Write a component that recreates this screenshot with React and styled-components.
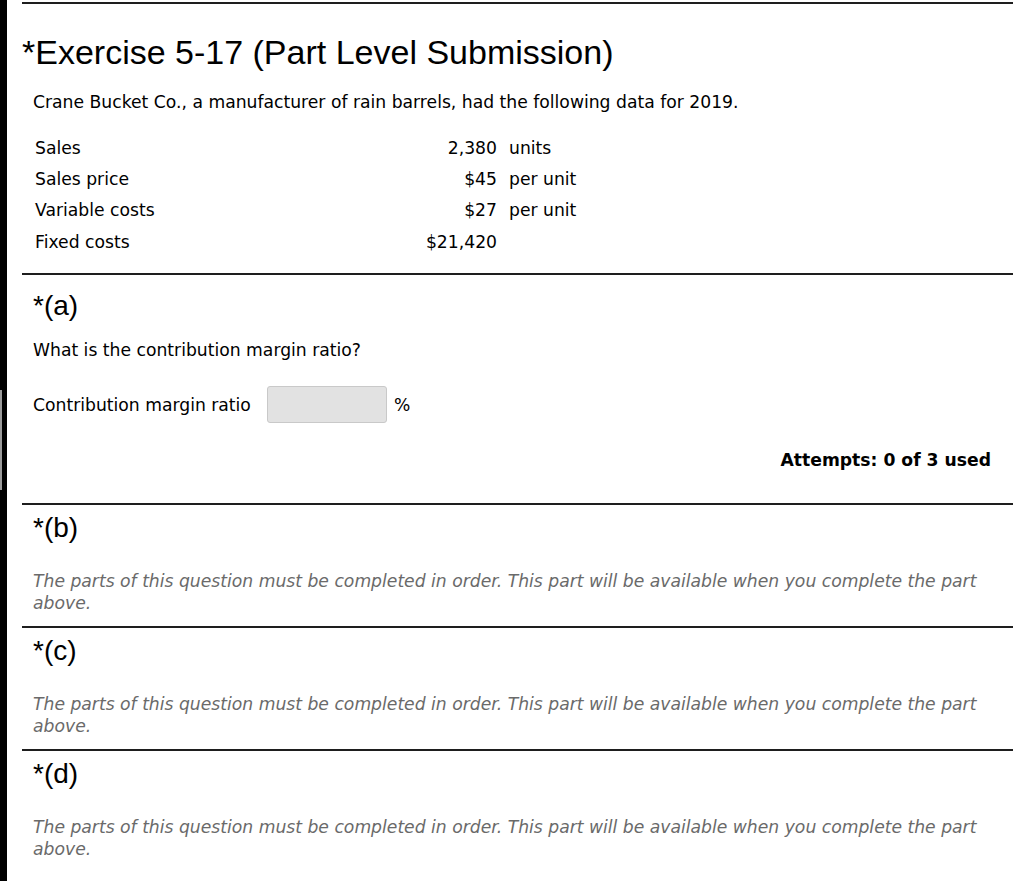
import React from "react";
import styled, { createGlobalStyle } from "styled-components";

const Global = createGlobalStyle`
  html, body { margin: 0; padding: 0; background: #fff; }
  body { font-family: "DejaVu Sans", Verdana, sans-serif; color: #000; }
  * { box-sizing: border-box; }
`;

const Page = styled.div`
  display: flex;
  min-height: 881px;
  width: 1024px;
`;

const LeftBar = styled.div`
  position: relative;
  flex: 0 0 7px;
  background: #000;
`;

const Thumb = styled.div`
  position: absolute;
  left: 0;
  top: 390px;
  width: 2px;
  height: 100px;
  background: #9a9a9a;
`;

const Main = styled.main`
  flex: 1;
  padding: 2px 11px 0 15px;
`;

const Section = styled.section`
  border-top: 2px solid #1e1e1e;
  padding: ${(p) => p.$pad || "0"};
`;

const Title = styled.h1`
  margin: 28px 0 0 0;
  font-family: "Liberation Sans", Arial, sans-serif;
  font-weight: 400;
  font-size: 34px;
  line-height: 40px;
`;

const Body = styled.p`
  margin: ${(p) => p.$m || "0"};
  padding-left: 11px;
  font-size: 17.2px;
  line-height: 20px;
`;

const DataTable = styled.div`
  display: grid;
  grid-template-columns: 330px 132px auto;
  margin: 20px 0 0 13px;
  font-size: 17.2px;
`;

const Cell = styled.div`
  height: 31.3px;
  display: flex;
  align-items: center;
  justify-content: ${(p) => (p.$right ? "flex-end" : "flex-start")};
  padding-left: ${(p) => (p.$unit ? "12px" : "0")};
`;

const PartHeading = styled.h2`
  margin: ${(p) => p.$m || "6px 0 0 0"};
  padding-left: 11px;
  font-family: "Liberation Sans", Arial, sans-serif;
  font-weight: 400;
  font-size: 28px;
  line-height: 34px;
`;

const AnswerRow = styled.div`
  display: flex;
  align-items: center;
  margin-top: 26px;
  padding-left: 11px;
  font-size: 17.2px;
`;

const AnswerInput = styled.input`
  width: 120px;
  height: 37px;
  margin: 0 7px 0 16px;
  background: #e2e2e2;
  border: 1px solid #c9c9c9;
  border-radius: 3px;
  font-family: inherit;
  font-size: 16px;
  padding: 0 6px;
`;

const Attempts = styled.div`
  margin-top: 27px;
  padding-right: 22px;
  text-align: right;
  font-size: 17.2px;
  line-height: 20px;
  font-weight: 700;
`;

const Locked = styled.p`
  margin: 25px 0 0 0;
  padding-left: 11px;
  padding-right: 20px;
  font-size: 17.2px;
  line-height: 22px;
  font-style: italic;
  color: #6a6a6a;
`;

const rows = [
  ["Sales", "2,380", "units"],
  ["Sales price", "$45", "per unit"],
  ["Variable costs", "$27", "per unit"],
  ["Fixed costs", "$21,420", ""],
];

const lockedText =
  "The parts of this question must be completed in order. This part will be available when you complete the part above.";

export default function App() {
  return (
    <>
      <Global />
      <Page>
        <LeftBar>
          <Thumb />
        </LeftBar>
        <Main>
          <Section $pad="0 0 16px 0">
            <Title>*Exercise 5-17 (Part Level Submission)</Title>
            <Body $m="20px 0 0 0">
              Crane Bucket Co., a manufacturer of rain barrels, had the following data for 2019.
            </Body>
            <DataTable>
              {rows.map(([label, value, unit]) => (
                <React.Fragment key={label}>
                  <Cell>{label}</Cell>
                  <Cell $right>{value}</Cell>
                  <Cell $unit>{unit}</Cell>
                </React.Fragment>
              ))}
            </DataTable>
          </Section>
          <Section $pad="0 0 33px 0">
            <PartHeading $m="14px 0 0 0">*(a)</PartHeading>
            <Body $m="17px 0 0 0">What is the contribution margin ratio?</Body>
            <AnswerRow>
              Contribution margin ratio
              <AnswerInput type="text" aria-label="Contribution margin ratio" />
              %
            </AnswerRow>
            <Attempts>Attempts: 0 of 3 used</Attempts>
          </Section>
          {["b", "c", "d"].map((k, i) => (
            <Section key={k} $pad={i < 2 ? "0 0 12px 0" : "0 0 30px 0"}>
              <PartHeading>*({k})</PartHeading>
              <Locked>{lockedText}</Locked>
            </Section>
          ))}
        </Main>
      </Page>
    </>
  );
}
